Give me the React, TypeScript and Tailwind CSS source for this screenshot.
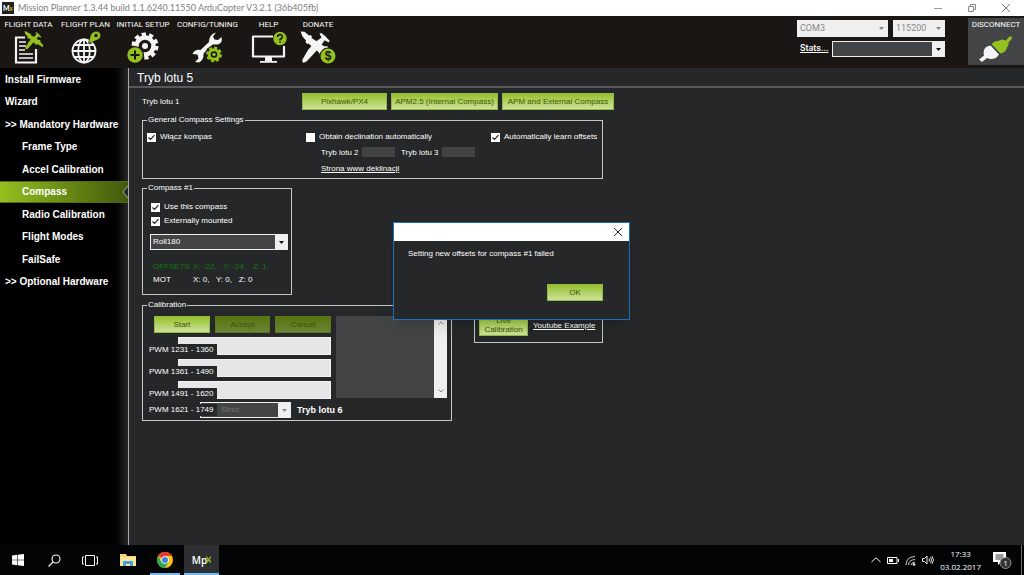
import React from 'react';
import clsx from 'clsx';

const GREEN = '#94c11f';

/* ---------- toolbar icons ---------- */

const Plane = () => (
  <g>
    <path d="M.5 .5L4.500 .8L9 4.500L10.500 4L12 5.500L11.500 7L17 10.500L22 14L25 15.500L27 15L28.500 17L28 18.500L33 24L32.500 28L24 23L20 23.500L18.500 21L13.500 17L8.500 12.500L7 13L5.500 11L6 9.500L2.500 5.500Z" />
    <path d="M24.500 4.500L26.500 6.500L21 14.500L14 22.500L6.500 30.500Q1.500 33.500 2.500 28.500L8 19L14.500 11.500Z" />
    <path d="M19.500 2.500L21.500 2L29.500 9.500L29 11.500L24 9L21.500 6.500Z" />
  </g>
);

const FlightDataIcon = () => (
  <svg width="30" height="34" viewBox="0 0 30 34" fill="none">
    <path d="M11 6.500H2v25h20V18" stroke="#f4f4f4" strokeWidth="2.200" />
    <path d="M5 11h7M5 15h7M5 19h6M5 23h14M5 27h14" stroke="#f4f4f4" strokeWidth="1.700" />
    <g transform="translate(10 0) scale(.58)" fill={GREEN}>
      <Plane />
    </g>
  </svg>
);

const FlightPlanIcon = () => (
  <svg width="32" height="34" viewBox="0 0 32 34" fill="none">
    <g stroke="#f4f4f4" strokeWidth="1.800">
      <circle cx="14" cy="20" r="11.500" />
      <ellipse cx="14" cy="20" rx="5.800" ry="11.500" />
      <path d="M14 8.500v23M2.500 20h23M4.500 14h19M4.500 26h19" />
    </g>
    <path d="M18.500 12.500L20.500 4Q23 -.5 27.500 .3Q31.500 2 30.500 6Q29.500 8.500 26 9.500Z" fill={GREEN} stroke="#191613" strokeWidth=".6" />
    <circle cx="26" cy="4.500" r="1.700" fill="#191613" />
  </svg>
);

const InitialSetupIcon = () => (
  <svg width="32" height="34" viewBox="0 0 32 34" fill="none">
    <circle cx="18" cy="15" r="8.500" stroke="#f4f4f4" strokeWidth="4.500" />
    <circle cx="18" cy="15" r="11.500" stroke="#f4f4f4" strokeWidth="4" strokeDasharray="4.200 3.027" />
    <circle cx="18" cy="15" r="3" fill="#f4f4f4" />
    <circle cx="8" cy="24" r="9" fill="#191613" />
    <circle cx="8" cy="24" r="7.700" fill={GREEN} />
    <path d="M8 19.500v9M3.500 24h9" stroke="#191613" strokeWidth="2" />
  </svg>
);

const ConfigIcon = () => (
  <svg width="32" height="34" viewBox="0 0 32 34" fill="none">
    <path d="M24 1.500L21 5.500L22.500 8.500L26 9L29.500 6Q31 11.500 26 13.500L20.500 13.500L11.500 22.500Q12 29 7 31.500L3 31L6.500 27.500L5.500 23.500L.5 23Q3 18 8.500 19L17 11Q17 3.500 24 1.500Z" fill="#f4f4f4" />
    <circle cx="22" cy="23.500" r="9" fill="#191613" />
    <circle cx="22" cy="23.500" r="4.800" stroke={GREEN} strokeWidth="3" />
    <circle cx="22" cy="23.500" r="6.800" stroke={GREEN} strokeWidth="2.200" strokeDasharray="3 2.340" />
    <circle cx="22" cy="23.500" r="1.700" fill={GREEN} />
  </svg>
);

const HelpIcon = () => (
  <svg width="36" height="34" viewBox="0 0 36 34" fill="none">
    <path d="M22 5.500H2v20h31V15" stroke="#f4f4f4" strokeWidth="2.200" strokeLinejoin="round" />
    <path d="M14 26h7v4h5v1.700H9V30h5z" fill="#f4f4f4" />
    <circle cx="29" cy="7.500" r="6.700" fill={GREEN} />
    <path d="M26.500 6Q26.700 3.500 29 3.500Q31.500 3.700 31.300 6Q31 7.500 29 8.500v1M29 10.500v1.500" stroke="#191613" strokeWidth="1.500" />
  </svg>
);

const DonateIcon = () => (
  <svg width="36" height="34" viewBox="0 0 36 34" fill="#f4f4f4">
    <Plane />
    <circle cx="28" cy="25" r="8.500" fill="#191613" />
    <circle cx="28" cy="25" r="7.500" fill={GREEN} />
    <text x="28" y="29" textAnchor="middle" fontSize="12" fontFamily="Liberation Sans, sans-serif" fontWeight="bold" fill="#191613">$</text>
  </svg>
);

const PlugIcon = () => (
  <svg width="36" height="28" viewBox="0 0 36 28">
    <path d="M1 24.500L6 20.500Q4.500 14 9 11.500L12.500 10.500L21 19.500Q18 24.500 12 24L9 23L4 27Z" fill="#f4f4f4" />
    <path d="M13.500 9L16.500 6.500L20 6L24 4.500L28 5.500L32 1L34.500 3L30.500 7.500L30.500 10L29 12.500Q28 17.500 22.500 18.500Z" fill={GREEN} />
  </svg>
);

/* ---------- shared controls ---------- */

type GreenButtonProps = {
  className?: string;
  disabled?: boolean;
  children: React.ReactNode;
};

const GreenButton: React.FC<GreenButtonProps> = ({ className, disabled, children }) => (
  <button
    type="button"
    disabled={disabled}
    className={clsx(
      'border text-center bg-linear-to-b',
      disabled
        ? 'border-[#5c7420] from-[#57750b] to-[#6c8432] text-[#3c5206]'
        : 'border-[#94b64a] from-[#94c11f] to-[#cde296] text-[#405704]',
      className,
    )}
  >
    {children}
  </button>
);

const Check: React.FC<{ label: string; checked?: boolean }> = ({ label, checked }) => (
  <label className="flex items-center gap-1 whitespace-nowrap">
    <span className="relative flex">
      <input
        type="checkbox"
        defaultChecked={checked}
        className="peer size-[9px] appearance-none bg-white"
      />
      <svg className="pointer-events-none absolute inset-0 hidden peer-checked:block" width="9" height="9" viewBox="0 0 9 9" fill="none">
        <path d="M1.500 4.500L3.500 6.500L7.500 2.200" stroke="#222" strokeWidth="1.200" />
      </svg>
    </span>
    {label}
  </label>
);

type ComboProps = {
  label: string;
  value: string;
  className?: string;
  selectClass?: string;
  arrow?: string;
  disabled?: boolean;
};

const Combo: React.FC<ComboProps> = ({ label, value, className, selectClass, arrow = '#111', disabled }) => (
  <div className={clsx('flex border border-[#f0f0f0] bg-[#f0f0f0]', className)}>
    <select
      aria-label={label}
      disabled={disabled}
      className={clsx('min-w-0 flex-1 appearance-none px-[2px] opacity-100', selectClass)}
    >
      <option>{value}</option>
    </select>
    <span className="flex w-3 items-center justify-center">
      <svg width="5" height="3" viewBox="0 0 5 3">
        <path d="M0 0h5L2.500 3z" fill={arrow} />
      </svg>
    </span>
  </div>
);

const Group: React.FC<{ title: string; className?: string; children: React.ReactNode }> = ({
  title,
  className,
  children,
}) => (
  <fieldset className={clsx('min-w-0 border border-[#c4c5c5]', className)}>
    <legend className="ml-1 px-px leading-[10px]">{title}</legend>
    {children}
  </fieldset>
);

/* ---------- page parts ---------- */

const TitleBar = () => (
  <header className="flex h-4 items-center bg-white font-['Lato',sans-serif] text-[9px] text-[#7d7d7d]">
    <span className="ml-[2px] flex size-3 items-center justify-center bg-[#222] text-[7px] font-bold text-white">
      M<i className="text-[#94c11f]">x</i>
    </span>
    <h1 className="ml-1 flex-1 whitespace-nowrap">Mission Planner 1.3.44 build 1.1.6240.11550 ArduCopter V3.2.1 (36b405fb)</h1>
    <div className="flex items-center gap-[26px] pr-[14px]">
      <button type="button" aria-label="Minimize">
        <svg width="8" height="8" viewBox="0 0 8 8"><path d="M0 4.500h8" stroke="#999" /></svg>
      </button>
      <button type="button" aria-label="Restore">
        <svg width="8" height="8" viewBox="0 0 8 8" fill="none" stroke="#888">
          <path d="M.5 2.500h5v5h-5zM2.500 2V.5h5v5H6" />
        </svg>
      </button>
      <button type="button" aria-label="Close">
        <svg width="8" height="8" viewBox="0 0 8 8"><path d="M0 0l8 8M8 0L0 8" stroke="#777" /></svg>
      </button>
    </div>
  </header>
);

const tools = [
  { name: 'FLIGHT DATA', width: 'w-[57px]', icon: <FlightDataIcon /> },
  { name: 'FLIGHT PLAN', width: 'w-[57px]', icon: <FlightPlanIcon /> },
  { name: 'INITIAL SETUP', width: 'w-[58px]', icon: <InitialSetupIcon /> },
  { name: 'CONFIG/TUNING', width: 'w-[71px]', icon: <ConfigIcon /> },
  { name: 'HELP', width: 'w-[51px]', icon: <HelpIcon /> },
  { name: 'DONATE', width: 'w-[48px]', icon: <DonateIcon /> },
];

const Toolbar = () => (
  <nav className="flex h-[52px] items-start bg-[#191613] pt-[2px] font-['Roboto',sans-serif] text-[8px] text-white">
    {tools.map((tool) => (
      <button key={tool.name} type="button" className={clsx('flex flex-col items-center whitespace-nowrap leading-[13px]', tool.width)}>
        {tool.name}
        {tool.icon}
      </button>
    ))}
    <div className="mt-[2px] mr-[23px] ml-auto flex flex-col gap-1 text-[9px]">
      <div className="flex gap-[5px]">
        <Combo label="Port" value="COM3" disabled arrow="#888" className="h-[17px] w-[91px]" selectClass="text-[#888]" />
        <Combo label="Baud rate" value="115200" disabled arrow="#888" className="h-[17px] w-[52px]" selectClass="text-[#888]" />
      </div>
      <div className="flex items-center justify-between">
        <a href="#stats" className="ml-[3px] font-medium underline">Stats...</a>
        <Combo label="Stats" value="" className="h-4 w-[113px]" selectClass="bg-[#434445]" />
      </div>
    </div>
    <button type="button" className="flex h-[47px] w-14 flex-col items-center bg-[#434445] leading-[13px]">
      DISCONNECT
      <span className="mt-1"><PlugIcon /></span>
    </button>
  </nav>
);

const menu = [
  { name: 'Install Firmware' },
  { name: 'Wizard' },
  { name: '>> Mandatory Hardware' },
  { name: 'Frame Type', sub: true },
  { name: 'Accel Calibration', sub: true },
  { name: 'Compass', sub: true, active: true },
  { name: 'Radio Calibration', sub: true },
  { name: 'Flight Modes', sub: true },
  { name: 'FailSafe', sub: true },
  { name: '>> Optional Hardware' },
];

const Sidebar = () => (
  <aside className="w-[129px] shrink-0 border-r border-[#a9a9a9] bg-linear-to-r from-black from-85% to-[#262728]">
    <ul className="flex h-[225px] flex-col text-[10px] font-bold text-white">
      {menu.map((item) => (
        <li key={item.name} className="flex-1">
          <a
            href="#setup"
            className={clsx(
              'flex h-full items-center whitespace-nowrap',
              item.sub ? 'pl-[22px]' : 'pl-[5px]',
              item.active && 'border-y border-[#4f6a12] bg-linear-to-r from-[#94c11f] to-[#435a0c]',
            )}
          >
            {item.name}
            {item.active && (
              <svg className="ml-auto" width="6" height="12" viewBox="0 0 6 12">
                <path d="M6 0L1 6l5 6" fill="#262728" stroke="#a9a9a9" />
              </svg>
            )}
          </a>
        </li>
      ))}
    </ul>
  </aside>
);

const CompassSettings = () => (
  <Group title="General Compass Settings" className="mt-[5px] h-[64px] w-[461px]">
    <div className="flex items-start px-[4px] pt-[6px]">
      <div className="w-[159px] shrink-0"><Check label="Włącz kompas" checked /></div>
      <div className="w-[185px] shrink-0">
        <Check label="Obtain declination automatically" />
        <div className="mt-1 ml-[15px] flex">
          <label className="flex w-20 gap-[3px] whitespace-nowrap">
            Tryb lotu 2
            <input className="h-[10px] w-[33px] bg-[#434445]" />
          </label>
          <label className="flex gap-[3px] whitespace-nowrap">
            Tryb lotu 3
            <input className="h-[10px] w-[33px] bg-[#434445]" />
          </label>
        </div>
        <a href="#declination" className="mt-1 ml-[15px] block underline">Strona www deklinacji</a>
      </div>
      <Check label="Automatically learn offsets" checked />
    </div>
  </Group>
);

const CompassOne = () => (
  <Group title="Compass #1" className="mt-1 h-[112px] w-[150px]">
    <div className="flex flex-col gap-[2px] pt-[8px] pl-2">
      <Check label="Use this compass" checked />
      <Check label="Externally mounted" checked />
    </div>
    <Combo label="Orientation" value="Roll180" className="mt-[7px] ml-[7px] h-4 w-[138px]" selectClass="bg-[#434445] text-white" />
    <dl className="mt-[11px] ml-[10px] grid grid-cols-[40px_1fr] gap-y-[1px] whitespace-pre">
      <dt className="text-[#0a7a0a]">OFFSETS</dt>
      <dd className="text-[#0a7a0a]">{'X: -22,   Y: -24,   Z: 1'}</dd>
      <dt>MOT</dt>
      <dd>{'X: 0,   Y: 0,   Z: 0'}</dd>
    </dl>
  </Group>
);

const ranges = ['PWM 1231 - 1360', 'PWM 1361 - 1490', 'PWM 1491 - 1620'];

const Calibration = () => (
  <Group title="Calibration" className="h-[121px] w-[310px]">
    <div className="flex gap-[5px] pt-[6px] pl-[6px]">
      <div className="w-[182px]">
        <div className="flex gap-[5px] pl-[5px]">
          <GreenButton className="h-[17px] w-[56px]">Start</GreenButton>
          <GreenButton className="h-[17px] w-[56px]" disabled>Accept</GreenButton>
          <GreenButton className="h-[17px] w-[56px]" disabled>Cancel</GreenButton>
        </div>
        <div className="mt-1 flex flex-col gap-1">
          {ranges.map((range) => (
            <div key={range} className="relative h-[18px] pl-[29px]">
              <div className="h-full border border-[#f2f2f2] bg-[#e6e6e6]" />
              <span className="absolute bottom-0 left-0 w-[68px] bg-[#262728] leading-[11px] whitespace-nowrap">{range}</span>
            </div>
          ))}
        </div>
      </div>
      <div className="flex h-[82px] w-[111px]">
        <textarea aria-label="Calibration log" className="min-w-0 flex-1 resize-none bg-[#434445]" />
        <div className="flex w-[13px] flex-col items-center justify-between bg-[#f0f0f0] py-[5px]">
          <svg width="6" height="4" viewBox="0 0 6 4" fill="none" stroke="#888"><path d="M.5 3.500L3 1l2.500 2.500" /></svg>
          <svg width="6" height="4" viewBox="0 0 6 4" fill="none" stroke="#888"><path d="M.5 .5L3 3L5.500 .5" /></svg>
        </div>
      </div>
    </div>
    <div className="relative mt-[3px] flex items-center pl-[57px]">
      <Combo label="Fitness" value="Strict" disabled arrow="#888" className="h-4 w-[91px]" selectClass="bg-[#434445] pl-5 text-[#777]" />
      <span className="absolute left-[6px] w-[68px] bg-[#262728] leading-[12px] whitespace-nowrap">PWM 1621 - 1749</span>
      <span className="ml-[6px] text-[9px] font-bold">Tryb lotu 6</span>
    </div>
  </Group>
);

const ErrorDialog = () => (
  <div
    role="dialog"
    aria-label="Error"
    className="absolute top-[154px] left-[264px] flex w-[237px] flex-col border border-[#1d6fc4] bg-[#262728] shadow-lg"
  >
    <div className="flex h-[18px] items-center justify-end bg-white pr-[7px]">
      <button type="button" aria-label="Close dialog">
        <svg width="8" height="8" viewBox="0 0 8 8"><path d="M0 0l8 8M8 0L0 8" stroke="#222" /></svg>
      </button>
    </div>
    <p className="mt-[7px] ml-[14px]">Setting new offsets for compass #1 failed</p>
    <GreenButton className="mt-6 mr-[26px] mb-[18px] h-[17px] w-[56px] self-end">OK</GreenButton>
  </div>
);

const CompassPage = () => (
  <main className="relative flex-1 bg-[#262728] font-['Liberation_Sans',sans-serif] text-[8px] leading-3 text-white">
    <h2 className="border-b-2 border-[#59595a] pt-[3px] pl-2 text-[12px] leading-[15px]">Tryb lotu 5</h2>
    <div className="pt-[5px] pl-[13px]">
      <div className="flex items-center gap-1">
        <span className="w-[156px]">Tryb lotu 1</span>
        <GreenButton className="h-[17px] w-[85px]">Pixhawk/PX4</GreenButton>
        <GreenButton className="h-[17px] w-[107px] whitespace-nowrap">APM2.5 (Internal Compass)</GreenButton>
        <GreenButton className="h-[17px] w-[112px] whitespace-nowrap">APM and External Compass</GreenButton>
      </div>
      <CompassSettings />
      <CompassOne />
      <div className="mt-[5px] flex items-start gap-[22px]">
        <Calibration />
        <Group title="Onboard" className="h-[43px] w-[129px]">
          <div className="flex items-center gap-[5px] pt-[5px] pl-[4px]">
            <GreenButton className="w-[49px] pb-px leading-[9px]">Live Calibration</GreenButton>
            <a href="#youtube" className="whitespace-nowrap underline">Youtube Example</a>
          </div>
        </Group>
      </div>
    </div>
    <ErrorDialog />
  </main>
);

const Taskbar = () => (
  <footer className="flex h-[30px] items-stretch bg-[#020406] font-['Open_Sans',sans-serif] text-[9px] text-white">
    <button type="button" aria-label="Start menu" className="flex w-9 items-center justify-center">
      <svg width="12" height="12" viewBox="0 0 12 12" fill="#fff"><path d="M0 1.500l5-.7v4.900H0zM5.600 .7L12 0v5.700H5.600zM0 6.300h5v4.900l-5-.7zM5.600 6.300H12V12l-6.400-.8z" /></svg>
    </button>
    <button type="button" aria-label="Search" className="flex w-9 items-center justify-center">
      <svg width="13" height="13" viewBox="0 0 13 13" fill="none" stroke="#fff" strokeWidth="1.100"><circle cx="8" cy="5" r="4" /><path d="M5 8L.5 12.500" /></svg>
    </button>
    <button type="button" aria-label="Task view" className="flex w-9 items-center justify-center">
      <svg width="16" height="11" viewBox="0 0 16 11" fill="none" stroke="#fff"><path d="M3.500 .5h9v10h-9zM2 2H.5v7H2M14 2h1.500v7H14" /></svg>
    </button>
    <button type="button" aria-label="Files" className="ml-[2px] flex w-9 items-center justify-center">
      <svg width="16" height="14" viewBox="0 0 16 14">
        <path d="M0 1h6l1 2h9v10H0z" fill="#f7d774" />
        <path d="M0 4h16v9H0z" fill="#fde69a" />
        <path d="M3 13V8h10v5h-3v-2H6v2z" fill="#3ea3e0" />
      </svg>
    </button>
    <button type="button" aria-label="Chrome" className="mx-1 flex w-[30px] items-center justify-center border-b-2 border-[#76b9ed] pt-[2px]">
      <svg width="16" height="16" viewBox="0 0 16 16">
        <circle cx="8" cy="8" r="8" fill="#fbc116" />
        <path d="M8 8L1.100 4A8 8 0 0 1 14.900 4H8z" fill="#e33b2e" />
        <path d="M1.100 4A8 8 0 0 0 8 16l3.500-6L8 8 4.500 10z" fill="#2da94f" />
        <circle cx="8" cy="8" r="3.800" fill="#fff" />
        <circle cx="8" cy="8" r="3" fill="#3f7ee8" />
      </svg>
    </button>
    <button type="button" aria-label="Mission Planner" className="flex w-[35px] items-center justify-center border-b-2 border-[#76b9ed] bg-[#2d2f31] pt-[2px] text-[10px] font-semibold">
      Mp
      <svg className="-ml-px" width="5" height="12" viewBox="0 0 6 12" stroke="#94c11f" strokeWidth="1.600"><path d="M0 2l6 7M6 2L0 10" /></svg>
    </button>
    <div className="ml-auto flex items-center gap-[6px]">
      <svg width="10" height="6" viewBox="0 0 10 6" fill="none" stroke="#fff"><path d="M.5 5L5 .8 9.500 5" /></svg>
      <svg width="12" height="7" viewBox="0 0 12 7" fill="none" stroke="#fff"><path d="M.5 .5h9.500v6H.5zM11.500 2v3" /><path d="M2 2h4v3H2z" fill="#fff" stroke="none" /></svg>
      <svg width="11" height="11" viewBox="0 0 11 11" fill="none" stroke="#ddd" strokeWidth=".9"><path d="M1 10Q1 2 10 1.500M3.500 10Q3.500 5 10 4.500M6 10Q6 7.500 10 7.200" /><circle cx="9" cy="9.500" r="1" fill="#ddd" /></svg>
      <svg width="12" height="10" viewBox="0 0 12 10" fill="none" stroke="#fff" strokeWidth=".9"><path d="M.5 3.500h2L5 1v8L2.500 6.500h-2zM7 3.500q1 1.500 0 3M8.500 2q2 3 0 6M10 1q3 4 0 8" /></svg>
      <time className="flex flex-col items-center text-[8px] leading-[13px]">
        <span>17:33</span>
        <span>03.02.2017</span>
      </time>
      <button type="button" aria-label="Notifications, 1 new" className="mr-[8px] ml-[6px]">
        <svg width="20" height="20" viewBox="0 0 20 20">
          <path d="M0 2h13v10H8l-3 3v-3H0z" fill="#fff" />
          <path d="M2.500 5h8M2.500 7h8M2.500 9h8" stroke="#020406" strokeWidth=".8" />
          <circle cx="12.500" cy="13" r="5.500" fill="#333" stroke="#aaa" strokeWidth=".8" />
          <text x="12.500" y="16" textAnchor="middle" fontSize="8" fill="#fff" fontFamily="Open Sans, sans-serif">1</text>
        </svg>
      </button>
    </div>
    <span className="mr-[2px] w-px bg-[#6b6b6b]" />
  </footer>
);

export default function App() {
  return (
    <div className="flex min-h-screen flex-col bg-[#262728] font-['Liberation_Sans',sans-serif]">
      <TitleBar />
      <Toolbar />
      <div className="flex flex-1">
        <Sidebar />
        <CompassPage />
      </div>
      <Taskbar />
    </div>
  );
}
